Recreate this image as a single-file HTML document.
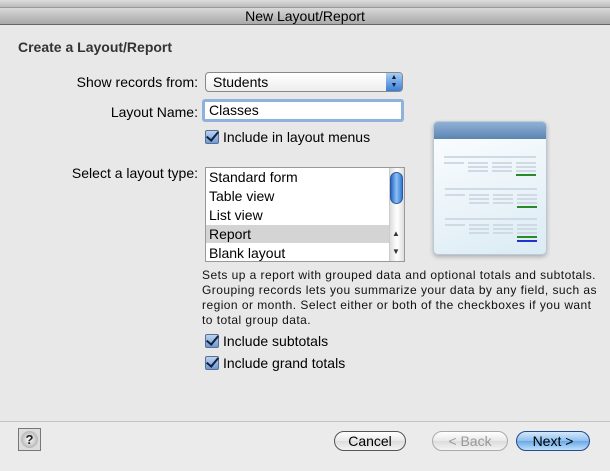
<!DOCTYPE html>
<html><head><style>
*{margin:0;padding:0;box-sizing:border-box}
body{width:610px;height:471px;overflow:hidden;background:#e8e8e8;font-family:"Liberation Sans",sans-serif;font-size:14px;color:#000;position:relative}
.a{position:absolute;white-space:nowrap}
.r{position:absolute;white-space:nowrap;text-align:right;width:200px}
.cb{position:absolute;width:14px;height:14px;border:1px solid #5a6f8c;border-radius:2px;background:linear-gradient(#bcd3ef,#6d9ad6)}
.cb:after{content:"";position:absolute;left:3px;top:-2px;width:5px;height:10px;border:solid #10223f;border-width:0 2.5px 2.5px 0;transform:rotate(40deg)}
.btn{position:absolute;height:20px;border:1px solid #555;border-radius:10px;background:linear-gradient(#fff,#e8e8e8 50%,#dcdcdc 51%,#f4f4f4);text-align:center;line-height:18px;font-size:14px}
</style></head><body>
<div class="a" style="left:0;top:0;width:610px;height:8px;background:linear-gradient(#ddd,#bbb);border-bottom:1px solid #999"></div>
<div class="a" style="left:0;top:8px;width:610px;height:17px;background:linear-gradient(#d8d8d8,#a9a9a9);border-bottom:1px solid #666;text-align:center;line-height:16px;font-size:14px">New Layout/Report</div>
<div class="a" style="left:18px;top:39px;font-weight:bold;color:#333">Create a Layout/Report</div>
<div class="r" style="left:-2px;top:74px">Show records from:</div>
<div class="a" style="left:205px;top:72px;width:198px;height:20px;border:1px solid #888;border-radius:4px;background:linear-gradient(#fff,#eee);padding-left:7px;line-height:18px">Students</div>
<div class="a" style="left:386px;top:73px;width:16px;height:18px;border-radius:0 3px 3px 0;background:linear-gradient(#a9cdf5,#3a7fd6);color:#123;font-size:7px;text-align:center;line-height:8px;padding-top:1px">▲<br>▼</div>
<div class="r" style="left:-2px;top:104px">Layout Name:</div>
<div class="a" style="left:202px;top:99px;width:202px;height:23px;border:3px solid #8fb2dd;border-radius:3px;background:#fff;padding-left:4px;line-height:17px">Classes</div>
<div class="cb" style="left:205px;top:130px"></div>
<div class="a" style="left:223px;top:129px">Include in layout menus</div>
<div class="r" style="left:-2px;top:165px">Select a layout type:</div>
<div class="a" style="left:205px;top:167px;width:200px;height:95px;border:1px solid #999;background:#fff"></div>
<div class="a" style="left:206px;top:225px;width:183px;height:18px;background:#d4d4d4"></div>
<div class="a" style="left:209px;top:168px;line-height:19px">Standard form<br>Table view<br>List view<br>Report<br>Blank layout</div>
<div class="a" style="left:389px;top:168px;width:15px;height:93px;background:linear-gradient(90deg,#ddd,#fff,#ddd);border-left:1px solid #ccc"></div>
<div class="a" style="left:390px;top:172px;width:13px;height:32px;border-radius:7px;background:linear-gradient(90deg,#2a68c8,#8cc0f5,#3377d4);border:1px solid #2b5aa0"></div>
<div class="a" style="left:392px;top:229px;font-size:8px;color:#333">▲</div>
<div class="a" style="left:392px;top:247px;font-size:8px;color:#333">▼</div>
<div class="a" style="left:433px;top:121px;width:114px;height:134px;border-radius:5px;background:linear-gradient(160deg,#fdfeff,#dbebf4);border:1px solid #b9cad6;box-shadow:0 2px 4px rgba(0,0,0,.25);overflow:hidden">
<div style="height:17px;background:linear-gradient(#8fb1d6,#5c84b2)"></div>
<svg width="114" height="117" style="display:block">
<g fill="#cfdae4">
<rect x="10" y="17" width="92" height="2"/><rect x="10" y="23" width="20" height="2"/>
<rect x="34" y="23" width="20" height="2"/><rect x="58" y="23" width="20" height="2"/><rect x="82" y="23" width="20" height="2"/>
<rect x="34" y="27" width="20" height="2"/><rect x="58" y="27" width="20" height="2"/><rect x="82" y="27" width="20" height="2"/>
<rect x="34" y="31" width="20" height="2"/><rect x="58" y="31" width="20" height="2"/><rect x="82" y="31" width="20" height="2"/>
<rect x="11" y="49" width="92" height="2"/><rect x="11" y="55" width="20" height="2"/>
<rect x="35" y="55" width="20" height="2"/><rect x="59" y="55" width="20" height="2"/><rect x="83" y="55" width="20" height="2"/>
<rect x="35" y="59" width="20" height="2"/><rect x="59" y="59" width="20" height="2"/><rect x="83" y="59" width="20" height="2"/>
<rect x="35" y="63" width="20" height="2"/><rect x="59" y="63" width="20" height="2"/><rect x="83" y="63" width="20" height="2"/>
<rect x="11" y="79" width="92" height="2"/><rect x="11" y="85" width="20" height="2"/>
<rect x="35" y="85" width="20" height="2"/><rect x="59" y="85" width="20" height="2"/><rect x="83" y="85" width="20" height="2"/>
<rect x="35" y="89" width="20" height="2"/><rect x="59" y="89" width="20" height="2"/><rect x="83" y="89" width="20" height="2"/>
<rect x="35" y="93" width="20" height="2"/><rect x="59" y="93" width="20" height="2"/><rect x="83" y="93" width="20" height="2"/>
</g>
<rect x="82" y="35" width="20" height="2" fill="#2a8a2a"/>
<rect x="83" y="67" width="20" height="2" fill="#2a8a2a"/>
<rect x="83" y="97" width="20" height="2" fill="#2a8a2a"/>
<rect x="83" y="101" width="20" height="2" fill="#2233cc"/>
</svg></div>
<div class="a" style="left:202px;top:268px;font-size:12px;line-height:15px;color:#111;letter-spacing:.45px">Sets up a report with grouped data and optional totals and subtotals.<br>Grouping records lets you summarize your data by any field, such as<br>region or month. Select either or both of the checkboxes if you want<br>to total group data.</div>
<div class="cb" style="left:205px;top:334px"></div>
<div class="a" style="left:223px;top:333px">Include subtotals</div>
<div class="cb" style="left:205px;top:356px"></div>
<div class="a" style="left:223px;top:355px">Include grand totals</div>
<div class="a" style="left:0;top:421px;width:610px;height:1px;background:#c4c4c4"></div>
<div class="a" style="left:0;top:422px;width:610px;height:49px;background:#ebebeb"></div>
<div class="a" style="left:18px;top:428px;width:23px;height:23px;border:1px solid #777;background:#ddd"><div style="margin:2px;width:17px;height:17px;border-radius:50%;background:radial-gradient(#fff,#999);text-align:center;font-weight:bold;font-size:13px;line-height:17px;color:#222">?</div></div>
<div class="btn" style="left:334px;top:431px;width:72px">Cancel</div>
<div class="btn" style="left:432px;top:431px;width:76px;border-color:#aaa;color:#999">&lt; Back</div>
<div class="btn" style="left:516px;top:431px;width:74px;border-color:#234a8a;background:linear-gradient(#d4e8fb,#8fc0f0 50%,#6aa8e8 51%,#bfe0fb)">Next &gt;</div>
</body></html>
